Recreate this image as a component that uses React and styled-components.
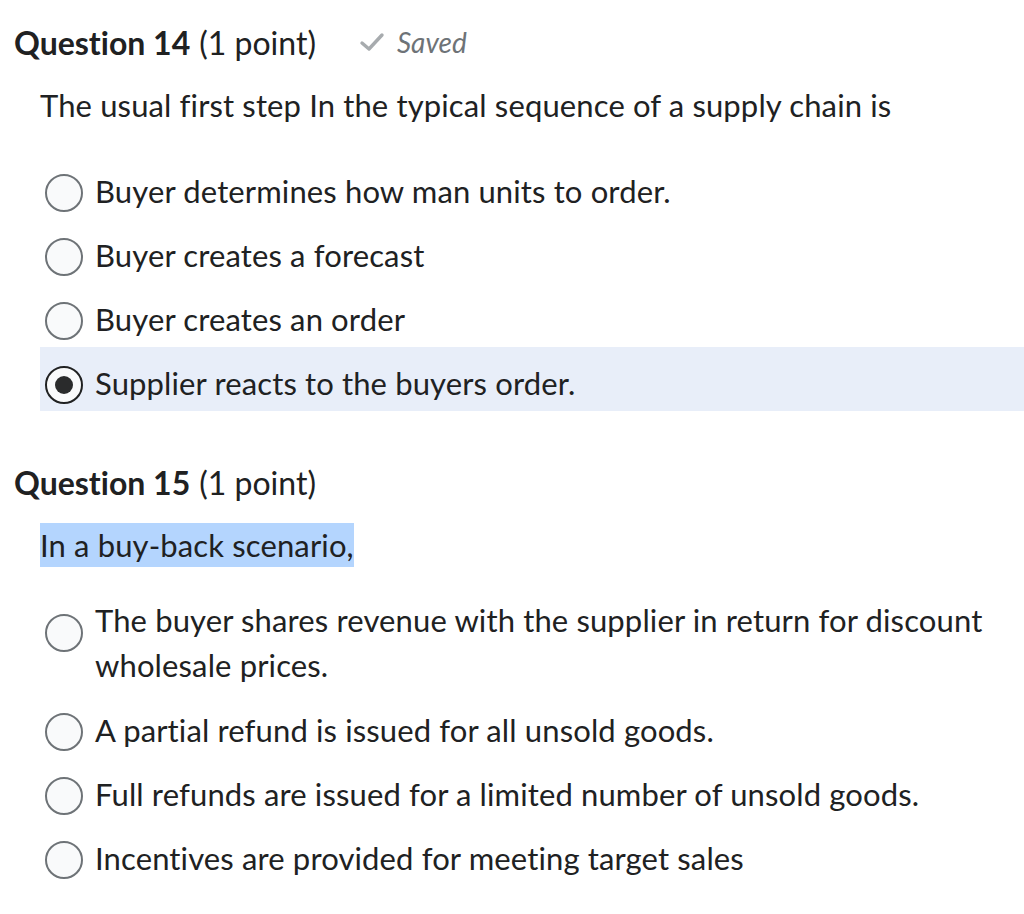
import React from "react";
import styled, { createGlobalStyle } from "styled-components";

const GlobalStyle = createGlobalStyle`
	body {
		margin: 0;
		background: #ffffff;
		font-family: Lato, "Noto Sans", sans-serif;
		color: #202122;
		font-variant-ligatures: none;
	}
`;

const Page = styled.div`
	padding: 22px 0 40px 14px;
`;

const Question = styled.section`
	margin-bottom: 51px;
`;

const Header = styled.div`
	display: flex;
	align-items: center;
	height: 40px;
	font-size: 32px;
`;

const Title = styled.span`
	font-weight: 700;
`;

const Points = styled.span`
	margin-left: 9px;
`;

const SavedTag = styled.span`
	display: flex;
	align-items: center;
	margin-left: 43px;
	color: #6e7377;
	font-size: 28px;
	font-style: italic;
	gap: 12px;
`;

const Prompt = styled.div`
	margin: 21px 0 ${(p) => (p.$tight ? "17px" : "28px")} 26px;
	font-size: 31px;
	line-height: 44px;
	letter-spacing: 0.13px;
`;

const Selected = styled.span`
	display: inline-block;
	background: #b4d5fe;
`;

const Options = styled.div`
	margin-left: 26px;
	display: flex;
	flex-direction: column;
`;

const Row = styled.label`
	display: flex;
	align-items: flex-start;
	padding: 14px 0 6px;
	background: ${(p) => (p.$checked ? "#e8eef9" : "transparent")};
	font-size: 31px;
	line-height: ${(p) => (p.$tall ? "45px" : "44px")};
	letter-spacing: 0.13px;
`;

const Radio = styled.span`
	flex: none;
	box-sizing: border-box;
	width: 38px;
	height: 38px;
	margin: ${(p) => (p.$tall ? "16px" : "5px")} 12px 0 5px;
	border-radius: 50%;
	border: 2px solid ${(p) => (p.$checked ? "#202122" : "#6e7377")};
	background: #f9fafb;
	display: flex;
	align-items: center;
	justify-content: center;
	&::after {
		content: "";
		display: ${(p) => (p.$checked ? "block" : "none")};
		width: 18px;
		height: 18px;
		border-radius: 50%;
		background: #2a2b2c;
	}
`;

const Text = styled.span`
	padding-right: 20px;
`;

function Check() {
	return (
		<svg width="26" height="20" viewBox="0 0 26 20">
			<path d="M3 11 L10 17 L23 3" fill="none" stroke="#a7abae" strokeWidth="3.4" strokeLinecap="round" strokeLinejoin="round" />
		</svg>
	);
}

function Option({ text, checked, tall }) {
	return (
		<Row $checked={checked} $tall={tall}>
			<Radio $checked={checked} $tall={tall} />
			<Text>{text}</Text>
		</Row>
	);
}

const q14 = [
	"Buyer determines how man units to order.",
	"Buyer creates a forecast",
	"Buyer creates an order",
	"Supplier reacts to the buyers order.",
];

const q15 = [
	"The buyer shares revenue with the supplier in return for discount wholesale prices.",
	"A partial refund is issued for all unsold goods.",
	"Full refunds are issued for a limited number of unsold goods.",
	"Incentives are provided for meeting target sales",
];

export default function App() {
	return (
		<Page>
			<GlobalStyle />
			<Question>
				<Header>
					<Title>Question 14</Title>
					<Points>(1 point)</Points>
					<SavedTag>
						<Check />
						Saved
					</SavedTag>
				</Header>
				<Prompt>The usual first step In the typical sequence of a supply chain is</Prompt>
				<Options>
					{q14.map((t, i) => (
						<Option key={i} text={t} checked={i === 3} />
					))}
				</Options>
			</Question>
			<Question>
				<Header>
					<Title>Question 15</Title>
					<Points>(1 point)</Points>
				</Header>
				<Prompt $tight>
					<Selected>In a buy-back scenario,</Selected>
				</Prompt>
				<Options>
					{q15.map((t, i) => (
						<Option key={i} text={t} tall={i === 0} />
					))}
				</Options>
			</Question>
		</Page>
	);
}
